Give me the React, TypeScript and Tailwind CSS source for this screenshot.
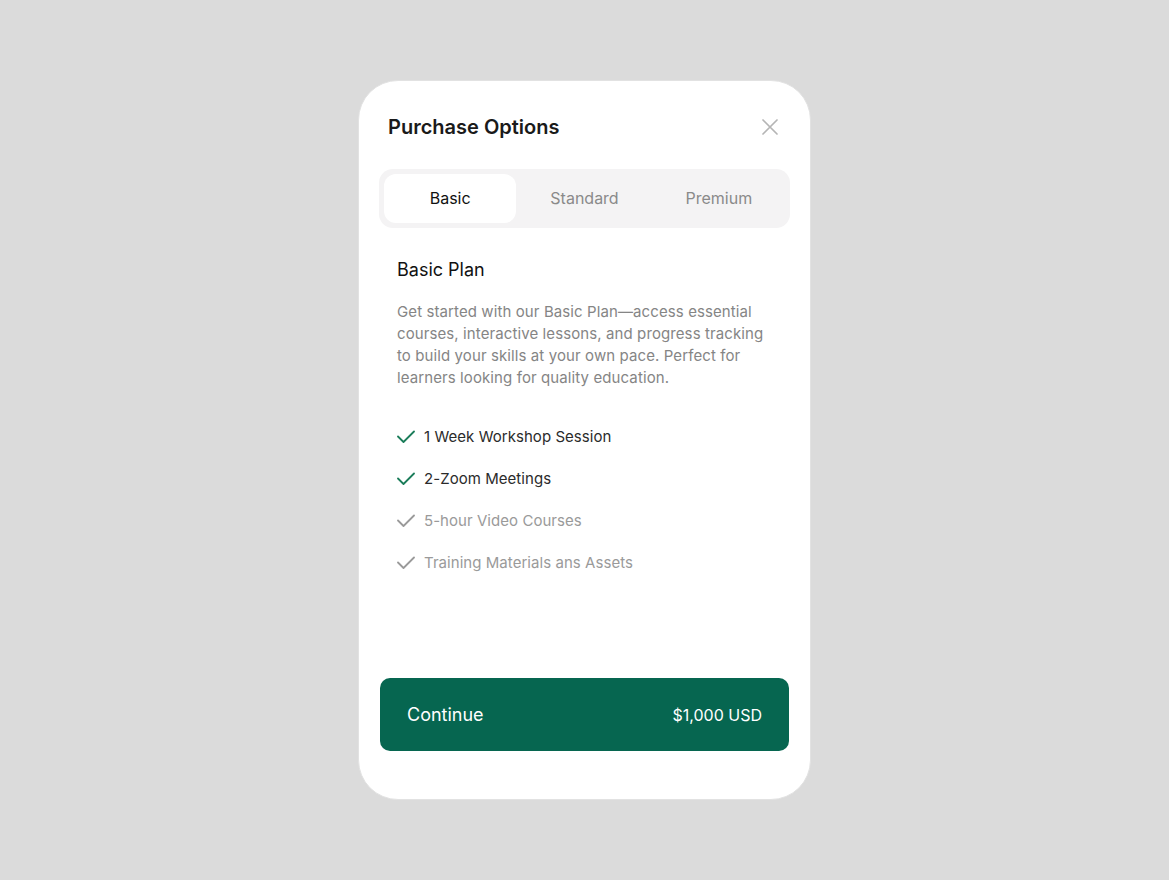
import { useState } from 'react'

const tabs = ['Basic', 'Standard', 'Premium']

const features = [
  { label: '1 Week Workshop Session', on: true },
  { label: '2-Zoom Meetings', on: true },
  { label: '5-hour Video Courses', on: false },
  { label: 'Training Materials ans Assets', on: false },
]

function CheckIcon({ on }: { on: boolean }) {
  return (
    <svg
      viewBox="0 0 18 14"
      className={'h-[14px] w-[18px] shrink-0 ' + (on ? 'text-[#1b7d5a]' : 'text-[#9a9a9a]')}
      fill="none"
      stroke="currentColor"
      strokeWidth={1.8}
      strokeLinecap="round"
      strokeLinejoin="round"
    >
      <path d="M1 6.5 6.5 12 17 1.5" />
    </svg>
  )
}

export default function App() {
  const [active, setActive] = useState(0)
  return (
    <div
      className="flex min-h-screen items-center justify-center bg-[#dbdbdb]"
      style={{ fontFamily: 'Inter, "Noto Sans", sans-serif' }}
    >
      <div className="flex h-[720px] w-[453px] flex-col rounded-[40px] border border-[#e2e2e2] bg-white px-[20px] pb-[48px] pt-[32px]">
        <div className="flex items-center justify-between pl-[9px] pr-[12px]">
          <h1 className="text-[20px] font-semibold leading-[28px] text-[#1a1a1a]">Purchase Options</h1>
          <button className="text-[#b5b5b5]">
            <svg viewBox="0 0 16 16" className="h-[16px] w-[16px]" fill="none" stroke="currentColor" strokeWidth={1.7} strokeLinecap="round">
              <path d="M1 1l14 14M15 1 1 15" />
            </svg>
          </button>
        </div>

        <div className="mt-[28px] grid grid-cols-3 gap-[2px] rounded-[14px] bg-[#f4f3f4] p-[5px]">
          {tabs.map((t, i) => (
            <button
              key={t}
              onClick={() => setActive(i)}
              className={
                'h-[49px] rounded-[12px] pb-[1px] text-[16px] ' +
                (i === active ? 'bg-white text-[#111]' : 'text-[#8a8a8a]')
              }
            >
              {t}
            </button>
          ))}
        </div>

        <div className="px-[18px]">
          <h2 className="mt-[28px] text-[18px] leading-[28px] text-[#111]">Basic Plan</h2>
          <p className="mt-[17px] text-[15px] leading-[22px] tracking-[0.1px] text-[#858585]">
            Get started with our Basic Plan—access essential courses, interactive lessons, and progress tracking to build your skills at your own pace. Perfect for learners looking for quality education.
          </p>
          <ul className="mt-[37px] flex flex-col gap-[20px]">
            {features.map((f) => (
              <li key={f.label} className="flex items-center gap-[9px] text-[15px] leading-[22px] tracking-[0.05px]">
                <CheckIcon on={f.on} />
                <span className={f.on ? 'text-[#2b2b2b]' : 'text-[#9a9a9a]'}>{f.label}</span>
              </li>
            ))}
          </ul>
        </div>

        <div className="flex-1" />

        <button className="mx-[1px] flex h-[73px] items-center justify-between rounded-[10px] bg-[#066650] px-[27px] text-white">
          <span className="text-[18px]">Continue</span>
          <span className="text-[16px]">$1,000 USD</span>
        </button>
      </div>
    </div>
  )
}
